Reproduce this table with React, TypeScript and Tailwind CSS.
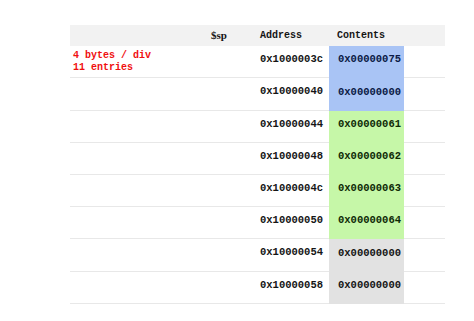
import React from "react";

type Row = {
  address: string;
  value: string;
  tone: "blue" | "green" | "gray";
  h: string;
};

const rows: Row[] = [
  { address: "0x1000003c", value: "0x00000075", tone: "blue", h: "h-[32px]" },
  { address: "0x10000040", value: "0x00000000", tone: "blue", h: "h-[33px]" },
  { address: "0x10000044", value: "0x00000061", tone: "green", h: "h-[32px]" },
  { address: "0x10000048", value: "0x00000062", tone: "green", h: "h-[32px]" },
  { address: "0x1000004c", value: "0x00000063", tone: "green", h: "h-[32px]" },
  { address: "0x10000050", value: "0x00000064", tone: "green", h: "h-[32px]" },
  { address: "0x10000054", value: "0x00000000", tone: "gray", h: "h-[33px]" },
  { address: "0x10000058", value: "0x00000000", tone: "gray", h: "h-[32px]" },
];

const toneClass = {
  blue: "bg-[#a9c4f5] text-[#0b1a45]",
  green: "bg-[#c6f7a8] text-[#0f2a06]",
  gray: "bg-[#e2e2e2] text-[#151515]",
};

const App: React.FC = () => {
  return (
    <div className="w-[474px] h-[321px] bg-white overflow-hidden pt-[25px] pl-[70px] font-['Liberation_Mono',monospace] font-bold text-[10px] text-[#151515]">
      <div className="w-[375px]">
        {/* Cabecera */}
        <div className="flex h-[21px] items-center bg-[#f2f2f2]">
          <div className="w-[125px]" />
          <div className="w-[48px] text-center font-['Liberation_Serif',serif] text-[11px]">
            $sp
          </div>
          <div className="w-[86px] pl-[17px]">Address</div>
          <div className="w-[75px] pl-[8px]">Contents</div>
        </div>

        {/* Filas */}
        {rows.map((row, i) => (
          <div key={row.address} className={`flex ${row.h}`}>
            <div className="w-[125px] border-b border-[#e8e8e8] pt-[4px] pl-[3px] leading-[12px] text-[#f01010]">
              {i === 0 && (
                <>
                  <div>4 bytes / div</div>
                  <div>11 entries</div>
                </>
              )}
            </div>
            <div className="w-[48px] border-b border-[#e8e8e8]" />
            <div className="w-[86px] border-b border-[#e8e8e8] pl-[17px] pb-[4px] flex items-center text-[10.5px]">
              {row.address}
            </div>
            <div
              className={`w-[75px] pl-[9px] pb-[4px] flex items-center text-[10.5px] ${toneClass[row.tone]}`}
            >
              {row.value}
            </div>
            <div className="w-[41px] border-b border-[#e8e8e8]" />
          </div>
        ))}
      </div>
    </div>
  );
};

export default App;
